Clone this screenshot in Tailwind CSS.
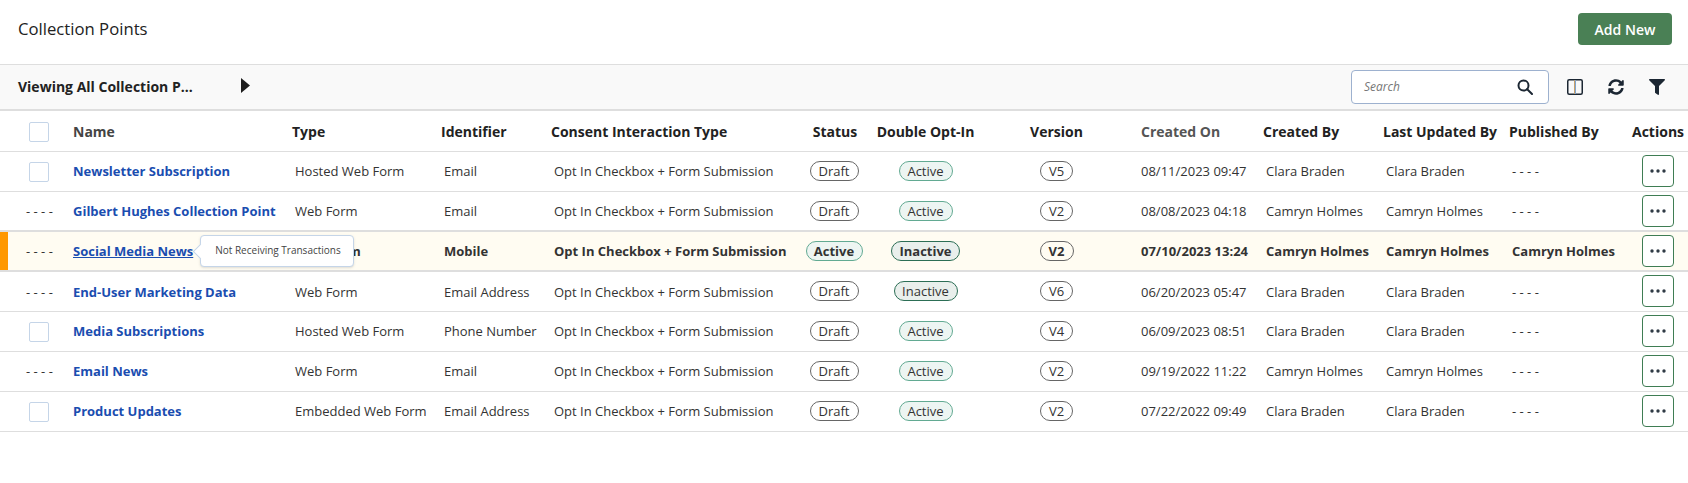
<!DOCTYPE html>
<html lang="en">
<head>
  <meta charset="UTF-8">
  <title>Collection Points</title>
  <script src="https://cdn.jsdelivr.net/npm/@tailwindcss/browser@4"></script>
</head>
<body class="bg-white text-[#333] font-['Open_Sans',sans-serif] text-[13px] min-h-screen">
  <header class="h-[65px] flex items-start justify-between pl-[18px] pr-[16px] pt-[13px] border-b border-[#dedede]">
    <h1 class="text-[16.7px] leading-[32px] text-[#222]">Collection Points</h1>
    <button class="w-[94px] h-[32px] rounded-[4px] bg-[#4a8055] text-white text-[14px] font-semibold">Add New</button>
  </header>

  <div class="h-[46px] flex items-center bg-[#f9f9f9] border-b-2 border-[#dedede] pl-[18px] pr-[23px]">
    <span class="w-[223px] mb-[2px] text-[14px] font-bold text-[#222]">Viewing All Collection P...</span>
    <svg class="w-[9px] h-[15px] mb-[4px]" viewBox="0 0 9 15"><polygon points="0,0 9,7.5 0,15" fill="#1c1c1c"/></svg>
    <div class="ml-auto w-[198px] h-[34px] flex items-center justify-between bg-white border border-[#9db1cf] rounded-[4px] pl-[12px] pr-[15px]">
      <span class="text-[12px] italic text-[#777]">Search</span>
      <svg class="w-[16px] h-[16px]" viewBox="0 0 16 16" fill="none" stroke="#1c2733" stroke-width="2"><circle cx="6.5" cy="6.5" r="5"/><path d="M10.2 10.2 15 15" stroke-linecap="round"/></svg>
    </div>
    <svg class="ml-[18px] w-[16px] h-[16px]" viewBox="0 0 16 16" fill="none"><rect x="0.75" y="0.75" width="14.5" height="14.5" rx="1.5" stroke="#1c2733" stroke-width="1.5"/><path d="M7.5 1v14" stroke="#c9a06a"/><path d="M8.5 1v14" stroke="#7fa6d0"/></svg>
    <svg class="ml-[25px] w-[16px] h-[16px]" viewBox="0 0 512 512" fill="#1c2733"><path d="M370.72 133.28C339.458 104.008 298.888 87.962 255.848 88c-77.458.068-144.328 53.178-162.791 126.85-1.344 5.363-6.122 9.15-11.651 9.15H24.103c-7.498 0-13.194-6.807-11.807-14.176C33.933 94.924 134.813 8 256 8c66.448 0 126.791 26.136 171.315 68.685L463.03 40.97C478.149 25.851 504 36.559 504 57.941V192c0 13.255-10.745 24-24 24H345.941c-21.382 0-32.09-25.851-16.971-40.971l41.75-41.749zM32 296h134.059c21.382 0 32.09 25.851 16.971 40.971l-41.75 41.75c31.262 29.273 71.835 45.319 114.876 45.28 77.418-.07 144.315-53.144 162.787-126.849 1.344-5.363 6.122-9.15 11.651-9.15h57.304c7.498 0 13.194 6.807 11.807 14.176C478.067 417.076 377.187 504 256 504c-66.448 0-126.791-26.136-171.315-68.685L48.97 471.03C33.851 486.149 8 475.441 8 454.059V320c0-13.255 10.745-24 24-24z"/></svg>
    <svg class="ml-[25px] w-[16px] h-[16px]" viewBox="0 0 512 512" fill="#1c2733"><path d="M487.976 0H24.028C2.71 0-8.047 25.866 7.058 40.971L192 225.941V432c0 7.831 3.821 15.17 10.237 19.662l80 55.98C298.02 518.69 320 507.493 320 487.98V225.941l184.947-184.97C520.021 25.896 509.338 0 487.976 0z"/></svg>
  </div>

  <div class="relative">
    <table class="w-[1688px] table-fixed border-collapse whitespace-nowrap">
      <colgroup>
        <col class="w-[73px]"><col class="w-[219px]"><col class="w-[149px]"><col class="w-[110px]"><col class="w-[248px]"><col class="w-[70px]"><col class="w-[113px]"><col class="w-[149px]"><col class="w-[132px]"><col class="w-[120px]"><col class="w-[126px]"><col class="w-[123px]"><col class="w-[56px]">
      </colgroup>
      <thead>
        <tr class="h-[40px] border-b border-[#dedede] text-[14px] text-left text-[#222] [&_th]:font-bold [&_th]:pt-[2px]">
          <th class="pl-[29px]"><span class="block w-[20px] h-[20px] bg-white border border-[#c5d5e8] rounded-[2px]"></span></th>
          <th class="text-[#444]">Name</th>
          <th>Type</th>
          <th>Identifier</th>
          <th>Consent Interaction Type</th>
          <th class="text-center pl-[2px]">Status</th>
          <th class="text-center">Double Opt-In</th>
          <th class="text-center">Version</th>
          <th class="pl-[10px] text-[#555]">Created On</th>
          <th>Created By</th>
          <th>Last Updated By</th>
          <th>Published By</th>
          <th>Actions</th>
        </tr>
      </thead>
      <tbody class="[&_td]:pt-[2px] [&_td:nth-child(3)]:pl-[3px] [&_td:nth-child(4)]:pl-[3px] [&_td:nth-child(5)]:pl-[3px] [&_td:nth-child(6)]:pt-0 [&_td:nth-child(7)]:pt-0 [&_td:nth-child(8)]:pt-0 [&_td:nth-child(9)]:pl-[10px] [&_td:nth-child(10)]:pl-[3px] [&_td:nth-child(11)]:pl-[3px] [&_td:nth-child(12)]:pl-[3px] [&_td:nth-child(13)]:pl-[10px] [&_td:nth-child(13)]:pt-0 [&_tr]:h-[40px] [&_tr]:border-b [&_tr]:border-[#dedede] [&_a]:font-bold [&_a]:text-[#1a4db0]">
        <tr>
          <td class="pl-[29px]"><span class="block w-[20px] h-[20px] bg-white border border-[#c5d5e8] rounded-[2px]"></span></td>
          <td><a href="#">Newsletter Subscription</a></td>
          <td>Hosted Web Form</td>
          <td>Email</td>
          <td>Opt In Checkbox + Form Submission</td>
          <td class="text-center"><span class="inline-block w-[49px] h-[20px] leading-[18px] rounded-full border border-[#666]">Draft</span></td>
          <td class="text-center"><span class="inline-block w-[54px] h-[20px] leading-[18px] rounded-full border border-[#62aa92] bg-[#edf5f2]">Active</span></td>
          <td class="text-center"><span class="inline-block w-[33px] h-[20px] leading-[18px] rounded-full border border-[#666]">V5</span></td>
          <td>08/11/2023 09:47</td>
          <td>Clara Braden</td>
          <td>Clara Braden</td>
          <td>- - - -</td>
          <td><button class="flex items-center justify-center w-[32px] h-[32px] rounded-[4px] border border-[#3f7d54] bg-white"><svg class="w-[16px] h-[4px]" viewBox="0 0 16 4" fill="#2f3a45"><circle cx="2" cy="2" r="1.7"/><circle cx="8" cy="2" r="1.7"/><circle cx="14" cy="2" r="1.7"/></svg></button></td>
        </tr>
        <tr>
          <td class="pl-[26px]">- - - -</td>
          <td><a href="#">Gilbert Hughes Collection Point</a></td>
          <td>Web Form</td>
          <td>Email</td>
          <td>Opt In Checkbox + Form Submission</td>
          <td class="text-center"><span class="inline-block w-[49px] h-[20px] leading-[18px] rounded-full border border-[#666]">Draft</span></td>
          <td class="text-center"><span class="inline-block w-[54px] h-[20px] leading-[18px] rounded-full border border-[#62aa92] bg-[#edf5f2]">Active</span></td>
          <td class="text-center"><span class="inline-block w-[33px] h-[20px] leading-[18px] rounded-full border border-[#666]">V2</span></td>
          <td>08/08/2023 04:18</td>
          <td>Camryn Holmes</td>
          <td>Camryn Holmes</td>
          <td>- - - -</td>
          <td><button class="flex items-center justify-center w-[32px] h-[32px] rounded-[4px] border border-[#3f7d54] bg-white"><svg class="w-[16px] h-[4px]" viewBox="0 0 16 4" fill="#2f3a45"><circle cx="2" cy="2" r="1.7"/><circle cx="8" cy="2" r="1.7"/><circle cx="14" cy="2" r="1.7"/></svg></button></td>
        </tr>
        <tr class="!border-y-2 !border-[#dedede] bg-[#fffcf2] font-bold">
          <td class="pl-[26px] relative font-normal"><span class="absolute left-0 top-0 bottom-0 w-[8px] bg-[#ff9800]"></span>- - - -</td>
          <td><a href="#" class="underline">Social Media News</a></td>
          <td>Web Form</td>
          <td>Mobile</td>
          <td>Opt In Checkbox + Form Submission</td>
          <td class="text-center"><span class="inline-block w-[57px] h-[20px] leading-[18px] rounded-full border border-[#62aa92] bg-[#edf5f2]">Active</span></td>
          <td class="text-center"><span class="inline-block w-[69px] h-[20px] leading-[18px] rounded-full border border-[#2c6e55] bg-[#e9efec]">Inactive</span></td>
          <td class="text-center"><span class="inline-block w-[34px] h-[20px] leading-[18px] rounded-full border border-[#666]">V2</span></td>
          <td>07/10/2023 13:24</td>
          <td>Camryn Holmes</td>
          <td>Camryn Holmes</td>
          <td>Camryn Holmes</td>
          <td><button class="flex items-center justify-center w-[32px] h-[32px] rounded-[4px] border border-[#3f7d54] bg-white"><svg class="w-[16px] h-[4px]" viewBox="0 0 16 4" fill="#2f3a45"><circle cx="2" cy="2" r="1.7"/><circle cx="8" cy="2" r="1.7"/><circle cx="14" cy="2" r="1.7"/></svg></button></td>
        </tr>
        <tr>
          <td class="pl-[26px]">- - - -</td>
          <td><a href="#">End-User Marketing Data</a></td>
          <td>Web Form</td>
          <td>Email Address</td>
          <td>Opt In Checkbox + Form Submission</td>
          <td class="text-center"><span class="inline-block w-[49px] h-[20px] leading-[18px] rounded-full border border-[#666]">Draft</span></td>
          <td class="text-center"><span class="inline-block w-[64px] h-[20px] leading-[18px] rounded-full border border-[#2c6e55] bg-[#e9efec]">Inactive</span></td>
          <td class="text-center"><span class="inline-block w-[33px] h-[20px] leading-[18px] rounded-full border border-[#666]">V6</span></td>
          <td>06/20/2023 05:47</td>
          <td>Clara Braden</td>
          <td>Clara Braden</td>
          <td>- - - -</td>
          <td><button class="flex items-center justify-center w-[32px] h-[32px] rounded-[4px] border border-[#3f7d54] bg-white"><svg class="w-[16px] h-[4px]" viewBox="0 0 16 4" fill="#2f3a45"><circle cx="2" cy="2" r="1.7"/><circle cx="8" cy="2" r="1.7"/><circle cx="14" cy="2" r="1.7"/></svg></button></td>
        </tr>
        <tr>
          <td class="pl-[29px]"><span class="block w-[20px] h-[20px] bg-white border border-[#c5d5e8] rounded-[2px]"></span></td>
          <td><a href="#">Media Subscriptions</a></td>
          <td>Hosted Web Form</td>
          <td>Phone Number</td>
          <td>Opt In Checkbox + Form Submission</td>
          <td class="text-center"><span class="inline-block w-[49px] h-[20px] leading-[18px] rounded-full border border-[#666]">Draft</span></td>
          <td class="text-center"><span class="inline-block w-[54px] h-[20px] leading-[18px] rounded-full border border-[#62aa92] bg-[#edf5f2]">Active</span></td>
          <td class="text-center"><span class="inline-block w-[33px] h-[20px] leading-[18px] rounded-full border border-[#666]">V4</span></td>
          <td>06/09/2023 08:51</td>
          <td>Clara Braden</td>
          <td>Clara Braden</td>
          <td>- - - -</td>
          <td><button class="flex items-center justify-center w-[32px] h-[32px] rounded-[4px] border border-[#3f7d54] bg-white"><svg class="w-[16px] h-[4px]" viewBox="0 0 16 4" fill="#2f3a45"><circle cx="2" cy="2" r="1.7"/><circle cx="8" cy="2" r="1.7"/><circle cx="14" cy="2" r="1.7"/></svg></button></td>
        </tr>
        <tr>
          <td class="pl-[26px]">- - - -</td>
          <td><a href="#">Email News</a></td>
          <td>Web Form</td>
          <td>Email</td>
          <td>Opt In Checkbox + Form Submission</td>
          <td class="text-center"><span class="inline-block w-[49px] h-[20px] leading-[18px] rounded-full border border-[#666]">Draft</span></td>
          <td class="text-center"><span class="inline-block w-[54px] h-[20px] leading-[18px] rounded-full border border-[#62aa92] bg-[#edf5f2]">Active</span></td>
          <td class="text-center"><span class="inline-block w-[33px] h-[20px] leading-[18px] rounded-full border border-[#666]">V2</span></td>
          <td>09/19/2022 11:22</td>
          <td>Camryn Holmes</td>
          <td>Camryn Holmes</td>
          <td>- - - -</td>
          <td><button class="flex items-center justify-center w-[32px] h-[32px] rounded-[4px] border border-[#3f7d54] bg-white"><svg class="w-[16px] h-[4px]" viewBox="0 0 16 4" fill="#2f3a45"><circle cx="2" cy="2" r="1.7"/><circle cx="8" cy="2" r="1.7"/><circle cx="14" cy="2" r="1.7"/></svg></button></td>
        </tr>
        <tr>
          <td class="pl-[29px]"><span class="block w-[20px] h-[20px] bg-white border border-[#c5d5e8] rounded-[2px]"></span></td>
          <td><a href="#">Product Updates</a></td>
          <td>Embedded Web Form</td>
          <td>Email Address</td>
          <td>Opt In Checkbox + Form Submission</td>
          <td class="text-center"><span class="inline-block w-[49px] h-[20px] leading-[18px] rounded-full border border-[#666]">Draft</span></td>
          <td class="text-center"><span class="inline-block w-[54px] h-[20px] leading-[18px] rounded-full border border-[#62aa92] bg-[#edf5f2]">Active</span></td>
          <td class="text-center"><span class="inline-block w-[33px] h-[20px] leading-[18px] rounded-full border border-[#666]">V2</span></td>
          <td>07/22/2022 09:49</td>
          <td>Clara Braden</td>
          <td>Clara Braden</td>
          <td>- - - -</td>
          <td><button class="flex items-center justify-center w-[32px] h-[32px] rounded-[4px] border border-[#3f7d54] bg-white"><svg class="w-[16px] h-[4px]" viewBox="0 0 16 4" fill="#2f3a45"><circle cx="2" cy="2" r="1.7"/><circle cx="8" cy="2" r="1.7"/><circle cx="14" cy="2" r="1.7"/></svg></button></td>
        </tr>
      </tbody>
    </table>

    <!-- tooltip over the highlighted row -->
    <div class="absolute left-[200px] top-[124px] w-[154px] h-[32px] flex items-center justify-center pb-[2px] pl-[2px] bg-white border border-[#c5d5e8] rounded-[4px] shadow-sm text-[10px] text-[#444]">
      <span class="absolute -left-[6px] top-[10px] w-[11px] h-[11px] rotate-45 bg-white border-l border-b border-[#c5d5e8]"></span>
      <span class="relative">Not Receiving Transactions</span>
    </div>
  </div>
</body>
</html>
